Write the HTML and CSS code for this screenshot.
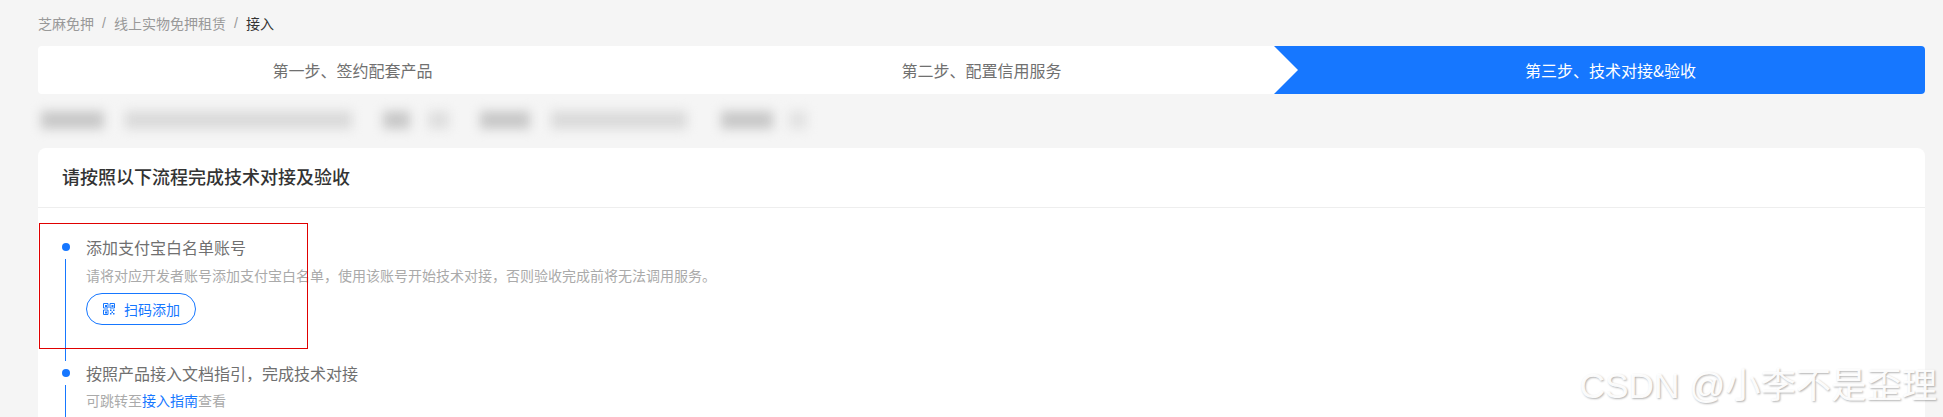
FILE: index.html
```html
<!DOCTYPE html>
<html lang="zh-CN">
<head>
<meta charset="utf-8">
<title>接入</title>
<link rel="stylesheet" href="styles.css">
</head>
<body>
<div class="page">
  <nav class="crumbs">
    <span>芝麻免押</span><span class="sep">/</span><span>线上实物免押租赁</span><span class="sep">/</span><span class="current">接入</span>
  </nav>
  <div class="steps">
    <div class="step first">第一步、签约配套产品</div>
    <div class="step">第二步、配置信用服务</div>
    <div class="step active">第三步、技术对接&amp;验收</div>
  </div>
  <div class="meta">
    <div class="field f1"><i class="label w1"></i><i class="value w2"></i></div>
    <div class="field f2"><i class="label w3"></i><i class="value w4"></i></div>
    <div class="field f3"><i class="label w5"></i><i class="value w6"></i></div>
    <div class="field f4"><i class="label w7"></i><i class="value w8"></i></div>
  </div>
  <section class="card">
    <h2 class="card-title">请按照以下流程完成技术对接及验收</h2>
    <div class="card-body">
      <div class="item first-item">
        <div class="rail"><span class="dot"></span><span class="line"></span></div>
        <div class="content">
          <div class="title">添加支付宝白名单账号</div>
          <div class="desc">请将对应开发者账号添加支付宝白名单，使用该账号开始技术对接，否则验收完成前将无法调用服务。</div>
          <button class="btn" type="button">
            <svg class="qr" viewBox="0 0 12 12" width="12" height="12" aria-hidden="true">
              <path fill="none" stroke="#1677ff" d="M.5.5h4.500v4.500H.5zM7 .5h4.500v4.500H7zM.5 7h4.500v4.500H.5z"/>
              <path fill="#1677ff" d="M2 2h2v2H2zM8.500 2h2v2h-2zM2 8.500h2v2H2zM7 6.500h1.500V8H7zM10 6.500h1.500V8H10zM8.500 8.500H10V10H8.500zM7 10h1.500v1.500H7zM10 10h1.500v1.500H10z"/>
            </svg>
            <span>扫码添加</span>
          </button>
        </div>
      </div>
      <div class="item last-item">
        <div class="rail"><span class="dot"></span><span class="line"></span></div>
        <div class="content">
          <div class="title">按照产品接入文档指引，完成技术对接</div>
          <div class="desc second">可跳转至<a class="link" href="#">接入指南</a>查看</div>
        </div>
      </div>
    </div>
  </section>
</div>
<div class="highlight"></div>
<div class="watermark">CSDN @小李不是歪理</div>
</body>
</html>
```

FILE: styles.css
```css
* { box-sizing: border-box; }
html, body { margin: 0; height: 417px; overflow: hidden; }
body {
  background: #f5f5f5;
  font-family: "Noto Sans CJK SC", "Liberation Sans", sans-serif;
  color: #333;
  position: relative;
}
.page { padding: 0 18px 0 38px; }

.crumbs {
  display: flex;
  padding-top: 12px;
  height: 46px;
  font-size: 14px;
  line-height: 22px;
  color: #999;
}
.sep { width: 20px; text-align: center; font-family: "Liberation Sans", sans-serif; }
.current { color: #333; }

.steps { display: flex; height: 48px; background: #fff; border-radius: 4px; }
.step {
  flex: 0 0 629px;
  display: flex;
  align-items: center;
  justify-content: center;
  font-size: 16px;
  color: #707070;
}
.step.active {
  flex: 0 0 651px;
  margin-left: -22px;
  padding-left: 22px;
  background: #1677ff;
  color: #fff;
  border-radius: 0 4px 4px 0;
  clip-path: polygon(0 0, 100% 0, 100% 100%, 0 100%, 24px 50%);
}

.meta { display: flex; height: 54px; padding: 17px 0 0 3px; }
.field { display: flex; height: 18px; filter: blur(5.500px); }
.field i { display: block; height: 18px; }
.label { background: #c8c8c8; }
.value { background: #dadada; }
.f1 { gap: 21px; }
.f2 { gap: 18px; margin-left: 31px; }
.f3 { gap: 21px; margin-left: 31px; }
.f4 { gap: 16px; margin-left: 34px; }
.w1 { width: 63px; }
.w2 { width: 227px; }
.w3 { width: 27px; }
.w4 { width: 21px; background: #dedede; }
.w5 { width: 50px; }
.w6 { width: 136px; }
.w7 { width: 52px; }
.w8 { width: 18px; background: #e2e2e2; }

.card { background: #fff; border-radius: 8px 8px 0 0; height: 269px; overflow: hidden; }
.card-title {
  margin: 0;
  height: 60px;
  padding: 0 24px;
  border-bottom: 1px solid #eee;
  font-size: 18px;
  font-weight: 500;
  line-height: 56px;
  color: #333;
}
.card-body { padding: 27px 24px 0; }

.item { display: flex; gap: 16px; }
.first-item { height: 126px; }
.last-item { height: 56px; }
.rail { flex: 0 0 8px; display: flex; flex-direction: column; }
.dot { flex: none; width: 8px; height: 8px; margin-top: 8px; border-radius: 50%; background: #1677ff; }
.line { flex: 1; width: 1px; margin: 8px 0 0 3px; background: #1677ff; }

.title { font-size: 16px; line-height: 24px; color: #707070; }
.desc { margin-top: 5px; font-size: 14px; line-height: 22px; color: #aaa; }
.desc.second { margin-top: 4px; }
.link { color: #1677ff; text-decoration: none; }

.btn {
  display: flex;
  align-items: center;
  width: 110px;
  height: 32px;
  margin-top: 7px;
  padding: 0 0 0 16px;
  border: 1px solid #1677ff;
  border-radius: 16px;
  background: #fff;
  color: #1677ff;
  font: inherit;
  font-size: 14px;
  line-height: 22px;
}
.qr { flex: none; margin-right: 9px; }

.highlight {
  position: absolute;
  left: 39px;
  top: 223px;
  width: 269px;
  height: 126px;
  border: 1px solid #e00000;
}
.watermark {
  position: absolute;
  right: 6px;
  top: 360px;
  white-space: nowrap;
  font-family: "Liberation Sans", "Noto Sans CJK SC", sans-serif;
  font-size: 35.300px;
  line-height: 52px;
  color: rgba(255, 255, 255, .95);
  text-shadow: 1px 1px 2px rgba(0, 0, 0, .3);
}
```
